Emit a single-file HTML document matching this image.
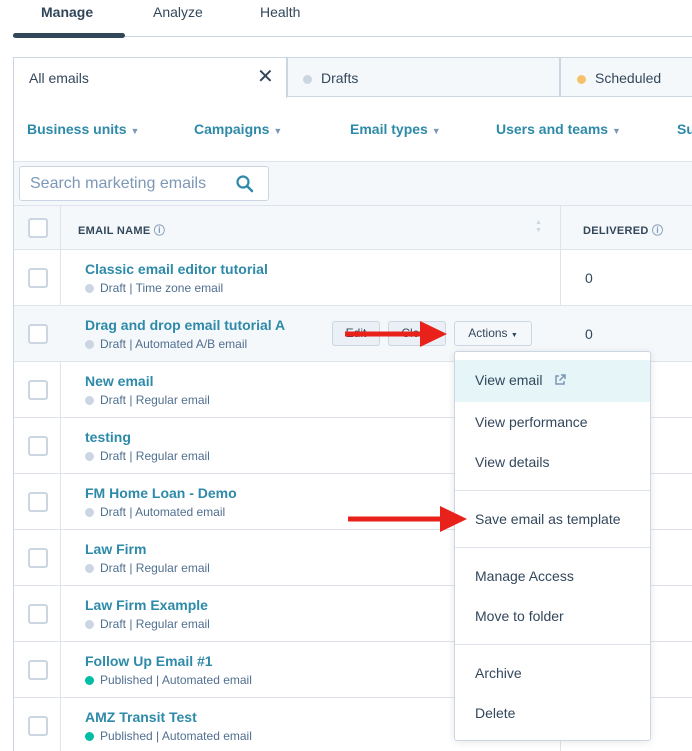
<!DOCTYPE html>
<html><head><meta charset="utf-8"><style>
*{box-sizing:border-box;margin:0;padding:0}
body{width:692px;height:751px;overflow:hidden;background:#fff;font-family:"Liberation Sans",sans-serif;color:#33475b;position:relative}
.a{position:absolute;white-space:nowrap}
.link{color:#2d8aa8;font-weight:bold;font-size:14px}
.sub{font-size:12px;color:#516f90}
.dot{display:inline-block;width:9px;height:9px;border-radius:50%;background:#cbd6e2;margin-right:6px;vertical-align:-1px}
.cb{position:absolute;left:28px;width:20px;height:20px;border:2px solid #cbd6e2;border-radius:3px;background:#fff}
.btn{position:absolute;top:321px;height:25px;border:1px solid #cbd6e2;border-radius:3px;background:#eaf0f6;font-size:12px;color:#33475b;text-align:center;line-height:23px}
.mi{position:absolute;left:475px;font-size:14px;color:#33475b}
.hr{position:absolute;left:455px;width:195px;height:1px;background:#dfe3eb}
</style></head><body>
<div class="a" style="left:41px;top:4px;font-size:14px;font-weight:bold">Manage</div>
<div class="a" style="left:153px;top:4px;font-size:14px">Analyze</div>
<div class="a" style="left:260px;top:4px;font-size:14px">Health</div>
<div class="a" style="left:13px;top:36px;width:679px;height:1px;background:#cbd6e2"></div>
<div class="a" style="left:13px;top:33px;width:112px;height:5px;border-radius:3px;background:#33475b"></div>

<div class="a" style="left:13px;top:57px;width:679px;height:694px;border-left:1px solid #cbd6e2"></div>
<div class="a" style="left:13px;top:57px;width:274px;height:41px;border:1px solid #cbd6e2;border-bottom:none;background:#fff"></div>
<div class="a" style="left:287px;top:57px;width:273px;height:40px;border:1px solid #cbd6e2;background:#f5f8fa"></div>
<div class="a" style="left:560px;top:57px;width:140px;height:40px;border:1px solid #cbd6e2;background:#f5f8fa"></div>
<div class="a" style="left:29px;top:70px;font-size:14px">All emails</div>
<div class="a" style="left:257px;top:64px;font-size:20px;color:#33475b">✕</div>
<div class="a" style="left:303px;top:70px;font-size:14px"><span class="dot" style="margin-right:9px"></span>Drafts</div>
<div class="a" style="left:577px;top:70px;font-size:14px"><span class="dot" style="background:#f5c26b;margin-right:9px"></span>Scheduled</div>

<div class="a link" style="left:27px;top:121px">Business units <span style="font-size:9px;color:#7c98b6">▼</span></div>
<div class="a link" style="left:194px;top:121px">Campaigns <span style="font-size:9px;color:#7c98b6">▼</span></div>
<div class="a link" style="left:350px;top:121px">Email types <span style="font-size:9px;color:#7c98b6">▼</span></div>
<div class="a link" style="left:496px;top:121px">Users and teams <span style="font-size:9px;color:#7c98b6">▼</span></div>
<div class="a link" style="left:677px;top:121px">Su</div>

<div class="a" style="left:14px;top:161px;width:678px;height:44px;background:#f5f8fa;border-top:1px solid #dfe3eb"></div>
<div class="a" style="left:19px;top:166px;width:250px;height:35px;border:1px solid #cbd6e2;border-radius:3px;background:#fff"></div>
<div class="a" style="left:30px;top:175px;font-size:16px;color:#7c98b6">Search marketing emails</div>
<svg class="a" style="left:235px;top:174px" width="20" height="20" viewBox="0 0 20 20"><circle cx="8" cy="8" r="5.5" fill="none" stroke="#2d8aa8" stroke-width="2.2"/><line x1="12" y1="12" x2="17" y2="17" stroke="#2d8aa8" stroke-width="2.5" stroke-linecap="round"/></svg>

<div class="a" style="left:14px;top:205px;width:678px;height:45px;background:#f5f8fa;border-top:1px solid #dfe3eb;border-bottom:1px solid #dfe3eb"></div>
<div class="a" style="left:60px;top:205px;width:1px;height:546px;background:#dfe3eb"></div>
<div class="a" style="left:560px;top:205px;width:1px;height:157px;background:#dfe3eb"></div>
<div class="a" style="left:560px;top:362px;width:1px;height:389px;background:#dfe3eb"></div>
<div class="cb" style="top:218px"></div>
<div class="a" style="left:78px;top:222px;font-size:11px;font-weight:bold;letter-spacing:.3px">EMAIL NAME <span style="color:#7c98b6">ⓘ</span></div>
<div class="a" style="left:535px;top:219px;font-size:7px;color:#cbd6e2;line-height:8px">▲<br>▼</div>
<div class="a" style="left:583px;top:222px;font-size:11px;font-weight:bold;letter-spacing:.3px">DELIVERED <span style="color:#7c98b6">ⓘ</span></div>

<div class="a" style="left:14px;top:306px;width:678px;height:56px;background:#f5f8fa"></div>

<!-- rows -->
<div class="a" style="left:14px;top:305px;width:678px;height:1px;background:#dfe3eb"></div>
<div class="a" style="left:14px;top:361px;width:678px;height:1px;background:#dfe3eb"></div>
<div class="a" style="left:14px;top:417px;width:678px;height:1px;background:#dfe3eb"></div>
<div class="a" style="left:14px;top:473px;width:678px;height:1px;background:#dfe3eb"></div>
<div class="a" style="left:14px;top:529px;width:678px;height:1px;background:#dfe3eb"></div>
<div class="a" style="left:14px;top:585px;width:678px;height:1px;background:#dfe3eb"></div>
<div class="a" style="left:14px;top:641px;width:678px;height:1px;background:#dfe3eb"></div>
<div class="a" style="left:14px;top:697px;width:678px;height:1px;background:#dfe3eb"></div>

<div class="cb" style="top:268px"></div><div class="a link" style="left:85px;top:261px">Classic email editor tutorial</div><div class="a sub" style="left:85px;top:281px"><span class="dot"></span>Draft | Time zone email</div><div class="a" style="left:585px;top:270px;font-size:14px">0</div>
<div class="cb" style="top:324px"></div><div class="a link" style="left:85px;top:317px">Drag and drop email tutorial A</div><div class="a sub" style="left:85px;top:337px"><span class="dot"></span>Draft | Automated A/B email</div><div class="a" style="left:585px;top:326px;font-size:14px">0</div>
<div class="cb" style="top:380px"></div><div class="a link" style="left:85px;top:373px">New email</div><div class="a sub" style="left:85px;top:393px"><span class="dot"></span>Draft | Regular email</div>
<div class="cb" style="top:436px"></div><div class="a link" style="left:85px;top:429px">testing</div><div class="a sub" style="left:85px;top:449px"><span class="dot"></span>Draft | Regular email</div>
<div class="cb" style="top:492px"></div><div class="a link" style="left:85px;top:485px">FM Home Loan - Demo</div><div class="a sub" style="left:85px;top:505px"><span class="dot"></span>Draft | Automated email</div>
<div class="cb" style="top:548px"></div><div class="a link" style="left:85px;top:541px">Law Firm</div><div class="a sub" style="left:85px;top:561px"><span class="dot"></span>Draft | Regular email</div>
<div class="cb" style="top:604px"></div><div class="a link" style="left:85px;top:597px">Law Firm Example</div><div class="a sub" style="left:85px;top:617px"><span class="dot"></span>Draft | Regular email</div>
<div class="cb" style="top:660px"></div><div class="a link" style="left:85px;top:653px">Follow Up Email #1</div><div class="a sub" style="left:85px;top:673px"><span class="dot" style="background:#00bda5"></span>Published | Automated email</div>
<div class="cb" style="top:716px"></div><div class="a link" style="left:85px;top:709px">AMZ Transit Test</div><div class="a sub" style="left:85px;top:729px"><span class="dot" style="background:#00bda5"></span>Published | Automated email</div>

<div class="btn" style="left:332px;width:48px">Edit</div>
<div class="btn" style="left:388px;width:58px">Clone</div>
<div class="btn" style="left:454px;width:78px;background:#f5f8fa">Actions <span style="font-size:7px">▼</span></div>

<!-- dropdown -->
<div class="a" style="left:454px;top:351px;width:197px;height:390px;background:#fff;border:1px solid #cbd6e2;border-radius:3px;box-shadow:0 1px 8px rgba(0,0,0,.1)"></div>
<div class="a" style="left:455px;top:360px;width:195px;height:42px;background:#e5f5f8"></div>
<div class="mi" style="top:372px">View email <svg style="margin-left:8px;vertical-align:-1px" width="12" height="12" viewBox="0 0 12 12"><path d="M5 2H2v8h8V7M7 1h4v4M11 1L5.5 6.5" fill="none" stroke="#7c98b6" stroke-width="1.5"/></svg></div>
<div class="mi" style="top:414px">View performance</div>
<div class="mi" style="top:454px">View details</div>
<div class="hr" style="top:490px"></div>
<div class="mi" style="top:511px">Save email as template</div>
<div class="hr" style="top:547px"></div>
<div class="mi" style="top:568px">Manage Access</div>
<div class="mi" style="top:608px">Move to folder</div>
<div class="hr" style="top:644px"></div>
<div class="mi" style="top:665px">Archive</div>
<div class="mi" style="top:705px">Delete</div>

<!-- arrows -->
<svg class="a" style="left:0;top:0" width="692" height="751">
<line x1="345" y1="334" x2="425" y2="334" stroke="#e8211a" stroke-width="5"/>
<polygon points="420,321 447,334 420,347" fill="#e8211a"/>
<line x1="348" y1="519" x2="445" y2="519" stroke="#e8211a" stroke-width="5"/>
<polygon points="440,506 467,519 440,532" fill="#e8211a"/>
</svg>
</body></html>
